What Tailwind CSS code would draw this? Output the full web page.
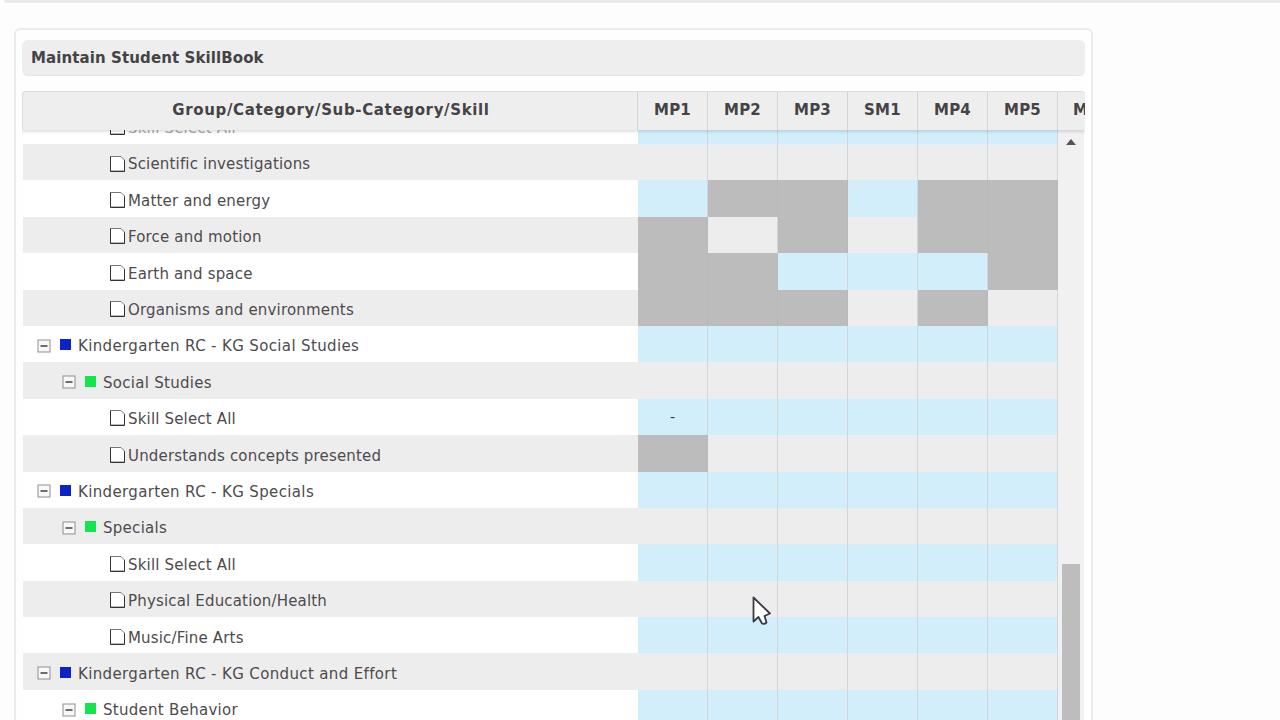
<!DOCTYPE html>
<html lang="en">
<head>
  <meta charset="UTF-8">
  <title>Maintain Student SkillBook</title>
  <script src="https://cdn.jsdelivr.net/npm/@tailwindcss/browser@4"></script>
</head>
<body class="bg-[#fdfdfd] h-[720px] overflow-hidden relative font-['DejaVu_Sans','Liberation_Sans',sans-serif] text-[#4d4b4d]">
  <!-- top strip -->
  <div class="h-[3px] ml-[4px] bg-[#e9e9e9] rounded-bl-sm"></div>

  <!-- panel -->
  <div class="ml-[14px] mt-[25px] w-[1079px] h-[700px] bg-[#fefefe] border-2 border-[#ebebeb] rounded-t-md px-[6px] pt-[10px]">
    <div class="h-[36px] bg-[#eeeeee] rounded-md border-b border-[#e6e6e6] pl-[9px] flex items-center text-[15px] tracking-[0.1px] font-bold text-[#454345] pt-[2px]">Maintain Student SkillBook</div>

    <div class="mt-[15px] h-[640px] overflow-hidden">
      <!-- header -->
      <div class="relative z-10 h-[39px] flex bg-[#eeeeee] border-t border-l border-[#dcdcdc] rounded-t-sm shadow-[0_2px_3px_rgba(0,0,0,0.12)] text-[15px] tracking-[0.2px] font-bold text-[#454345] overflow-hidden">
        <div class="w-[615px] shrink-0 flex items-center justify-center border-r border-[#d4d4d4] tracking-[0.65px] pb-[2px] pl-[2px]">Group/Category/Sub-Category/Skill</div>
        <div class="w-[70px] shrink-0 flex items-center justify-center border-r border-[#d4d4d4] pb-[2px]">MP1</div>
        <div class="w-[70px] shrink-0 flex items-center justify-center border-r border-[#d4d4d4] pb-[2px]">MP2</div>
        <div class="w-[70px] shrink-0 flex items-center justify-center border-r border-[#d4d4d4] pb-[2px]">MP3</div>
        <div class="w-[70px] shrink-0 flex items-center justify-center border-r border-[#d4d4d4] pb-[2px]">SM1</div>
        <div class="w-[70px] shrink-0 flex items-center justify-center border-r border-[#d4d4d4] pb-[2px]">MP4</div>
        <div class="w-[70px] shrink-0 flex items-center justify-center border-r border-[#d4d4d4] pb-[2px]">MP5</div>
        <div class="w-[26px] shrink-0 pl-[15px] leading-[36px]">M</div>
      </div>

      <div class="flex h-[601px] overflow-hidden">
        <!-- rows -->
        <div class="w-[1036px] shrink-0 overflow-hidden pl-[1px]">
          <div id="rows" class="-mt-[22.4px]"></div>
        </div>
        <!-- scrollbar -->
        <div class="w-[26px] shrink-0 bg-[#f1f1f1] flex flex-col items-center">
          <div class="mt-[9px] w-0 h-0 border-x-[5px] border-x-transparent border-b-[6px] border-b-[#555]"></div>
          <div class="mt-[419px] w-[18px] flex-1 bg-[#bdbdbd]"></div>
        </div>
      </div>
    </div>
  </div>

  <!-- mouse cursor -->
  <svg class="absolute left-[750px] top-[594px]" width="24" height="32" viewBox="0 0 24 32">
    <path d="M3.5 3.5 L3.5 27.5 L8.5 23 L12 29.5 Q14.5 30.5 16.5 28.5 L14.5 22 L20 19.5 Z" fill="#fff" stroke="#3a3a42" stroke-width="1.8" stroke-linejoin="round"/>
  </svg>

  <script>
    // b = blue/plain cell, d = dark cell
    const rows = [
      { level: 2, text: 'Skill Select All', cells: 'bbbbbb', dim: true },
      { level: 2, text: 'Scientific investigations', cells: 'bbbbbb' },
      { level: 2, text: 'Matter and energy', cells: 'bddbdd' },
      { level: 2, text: 'Force and motion', cells: 'dbdbdd' },
      { level: 2, text: 'Earth and space', cells: 'ddbbbd' },
      { level: 2, text: 'Organisms and environments', cells: 'dddbdb' },
      { level: 0, text: 'Kindergarten RC - KG Social Studies', cells: 'bbbbbb' },
      { level: 1, text: 'Social Studies', cells: 'bbbbbb' },
      { level: 2, text: 'Skill Select All', cells: 'bbbbbb', dash: true },
      { level: 2, text: 'Understands concepts presented', cells: 'dbbbbb' },
      { level: 0, text: 'Kindergarten RC - KG Specials', cells: 'bbbbbb' },
      { level: 1, text: 'Specials', cells: 'bbbbbb' },
      { level: 2, text: 'Skill Select All', cells: 'bbbbbb' },
      { level: 2, text: 'Physical Education/Health', cells: 'bbbbbb' },
      { level: 2, text: 'Music/Fine Arts', cells: 'bbbbbb' },
      { level: 0, text: 'Kindergarten RC - KG Conduct and Effort', cells: 'bbbbbb' },
      { level: 1, text: 'Student Behavior', cells: 'bbbbbb' }
    ];

    const minusBox = `<svg class="shrink-0 mt-[3px]" width="14" height="14" viewBox="0 0 14 14"><rect x="1" y="1" width="12" height="12" fill="#f8f8f8" stroke="#8f8f8f"/><path d="M3.5 7h7" stroke="#333" stroke-width="1.4"/></svg>`;
    const pageIcon = `<svg class="shrink-0 mt-[3px]" width="16" height="16" viewBox="0 0 16 16"><path d="M0.5 0.5h10.5l3.5 3.5v11h-14z" fill="#fff" stroke="#777"/><path d="M0.5 0.5v15h14v-11" fill="none" stroke="#333" stroke-width="1"/></svg>`;

    function label(row) {
      const dim = row.dim ? 'text-[#a8a8a8]' : '';
      if (row.level === 0) {
        return `<div class="flex items-center pl-[14px] tracking-[0.36px]">${minusBox}<span class="ml-[9px] w-[11px] h-[11px] bg-[#0a22c8] mt-[1px]"></span><span class="ml-[7px] pt-[5px]">${row.text}</span></div>`;
      }
      if (row.level === 1) {
        return `<div class="flex items-center pl-[39px] tracking-[0.28px]">${minusBox}<span class="ml-[9px] w-[11px] h-[11px] bg-[#12e64a] mt-[1px]"></span><span class="ml-[7px] pt-[5px]">${row.text}</span></div>`;
      }
      return `<div class="flex items-center pl-[87px] tracking-[0.17px]">${pageIcon}<span class="ml-[2px] pt-[5px] ${dim}">${row.text}</span></div>`;
    }

    function cell(type, even, dash) {
      let color = even ? 'bg-[#d2eefb]' : 'bg-[#eeeded]';
      if (type === 'd') color = 'bg-[#bdbcbc]';
      const border = type === 'd' ? 'border-[#b8b8b8]' : 'border-[#d2d6d8]';
      return `<div class="w-[70px] shrink-0 h-full border-r ${border} ${color} text-center text-[14px] text-[#333] leading-[36px]">${dash ? '-' : ''}</div>`;
    }

    document.getElementById('rows').innerHTML = rows.map((row, i) => {
      const even = i % 2 === 0;
      const cells = [...row.cells].map((c, n) => cell(c, even, row.dash && n === 0)).join('');
      return `<div class="h-[36.4px] flex items-center text-[15px] ${even ? 'bg-white' : 'bg-[#eeeded]'}">
        <div class="w-[615px] shrink-0">${label(row)}</div>
        <div class="flex h-full">${cells}</div>
      </div>`;
    }).join('');
  </script>
</body>
</html>
